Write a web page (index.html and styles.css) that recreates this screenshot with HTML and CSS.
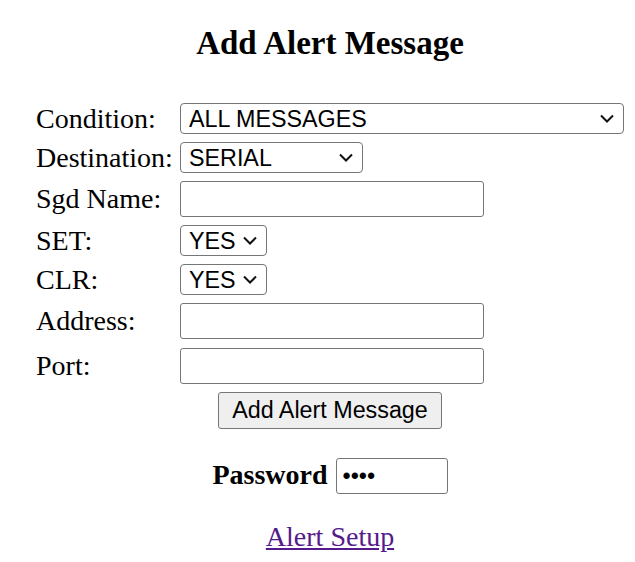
FILE: index.html
```html
<!DOCTYPE html>
<html lang="en">
<head>
    <meta charset="UTF-8">
    <title>Add Alert Message</title>
    <link rel="stylesheet" href="styles.css">
</head>
<body>
    <div class="page">
        <h3 class="title">Add Alert Message</h3>

        <form class="alert-form">
            <div class="row">
                <label class="row-label" for="condition">Condition:</label>
                <span class="select-wrap">
                    <select id="condition" class="sel sel-wide">
                        <option>ALL MESSAGES</option>
                        <option>ALARMS ONLY</option>
                    </select>
                    <svg class="chevron" width="14" height="9" viewBox="0 0 14 9"><path d="M1 1.5 L7 7.5 L13 1.5" fill="none" stroke="#111" stroke-width="2"/></svg>
                </span>
            </div>
            <div class="row">
                <label class="row-label" for="destination">Destination:</label>
                <span class="select-wrap">
                    <select id="destination" class="sel sel-mid">
                        <option>SERIAL</option>
                        <option>NETWORK</option>
                    </select>
                    <svg class="chevron" width="14" height="9" viewBox="0 0 14 9"><path d="M1 1.5 L7 7.5 L13 1.5" fill="none" stroke="#111" stroke-width="2"/></svg>
                </span>
            </div>
            <div class="row row-input">
                <label class="row-label" for="sgdName">Sgd Name:</label>
                <input type="text" id="sgdName" class="field">
            </div>
            <div class="row">
                <label class="row-label" for="set">SET:</label>
                <span class="select-wrap">
                    <select id="set" class="sel sel-small">
                        <option>YES</option>
                        <option>NO</option>
                    </select>
                    <svg class="chevron" width="14" height="9" viewBox="0 0 14 9"><path d="M1 1.5 L7 7.5 L13 1.5" fill="none" stroke="#111" stroke-width="2"/></svg>
                </span>
            </div>
            <div class="row">
                <label class="row-label" for="clr">CLR:</label>
                <span class="select-wrap">
                    <select id="clr" class="sel sel-small">
                        <option>YES</option>
                        <option>NO</option>
                    </select>
                    <svg class="chevron" width="14" height="9" viewBox="0 0 14 9"><path d="M1 1.5 L7 7.5 L13 1.5" fill="none" stroke="#111" stroke-width="2"/></svg>
                </span>
            </div>
            <div class="row row-input row-address">
                <label class="row-label" for="address">Address:</label>
                <input type="text" id="address" class="field">
            </div>
            <div class="row row-input">
                <label class="row-label" for="port">Port:</label>
                <input type="text" id="port" class="field">
            </div>

            <div class="submit-row">
                <button type="button" class="btn">Add Alert Message</button>
            </div>

            <div class="password-row">
                <strong class="password-label">Password</strong>
                <input type="password" id="password" class="field field-pass" value="abcd">
            </div>
        </form>

        <div class="link-row">
            <a href="#" class="setup-link">Alert Setup</a>
        </div>
    </div>
</body>
</html>
```

FILE: styles.css
```css
body {
    margin: 0;
    background: #FFFFFF;
    color: #000000;
    font-family: "Liberation Serif", "Times New Roman", serif;
}

.page {
    width: 588px;
    margin-left: 36px;
}

.title {
    margin: 24px 0 0;
    font-size: 33px;
    line-height: 38px;
    font-weight: bold;
    text-align: center;
}

.alert-form {
    margin-top: 41px;
}

.row {
    display: flex;
    align-items: center;
    height: 31px;
    margin-bottom: 8px;
}

.row-input {
    height: 36px;
}

.row-address {
    margin-bottom: 9px;
}

.row-label {
    width: 144px;
    flex-shrink: 0;
    font-size: 28px;
    line-height: 32px;
}

/* native arrow is tiny, so we hide it and draw a chevron on top */
.select-wrap {
    position: relative;
    display: flex;
}

.chevron {
    position: absolute;
    right: 10px;
    top: 11px;
    pointer-events: none;
}

.sel {
    appearance: none;
    -webkit-appearance: none;
    height: 31px;
    box-sizing: border-box;
    padding: 0 0 0 8px;
    font-family: "Liberation Sans", Arial, sans-serif;
    font-size: 23.3px;
    color: #000000;
    background: #FFFFFF;
    border: 1px solid #767676;
    border-radius: 4px;
}

.sel-wide {
    width: 444px;
}

.sel-mid {
    width: 183px;
}

.sel-small {
    width: 87px;
}

.field {
    width: 304px;
    height: 36px;
    box-sizing: border-box;
    padding: 0 4px;
    font-family: "Liberation Sans", Arial, sans-serif;
    font-size: 23.3px;
    border: 1px solid #767676;
    border-radius: 3px;
    background: #FFFFFF;
}

.submit-row {
    display: flex;
    justify-content: center;
    margin-top: 1px;
}

.btn {
    width: 224px;
    height: 37px;
    box-sizing: border-box;
    padding: 0;
    font-family: "Liberation Sans", Arial, sans-serif;
    font-size: 23.3px;
    color: #000000;
    background: #EFEFEF;
    border: 1px solid #767676;
    border-radius: 3px;
}

.password-row {
    display: flex;
    justify-content: center;
    align-items: baseline;
    gap: 8px;
    margin-top: 29px;
}

.password-label {
    font-size: 28px;
    line-height: 32px;
}

.field-pass {
    width: 112px;
    padding: 0 6px;
}

.link-row {
    margin-top: 27px;
    text-align: center;
}

.setup-link {
    font-size: 28px;
    line-height: 32px;
    color: #551A8B;
}
```
